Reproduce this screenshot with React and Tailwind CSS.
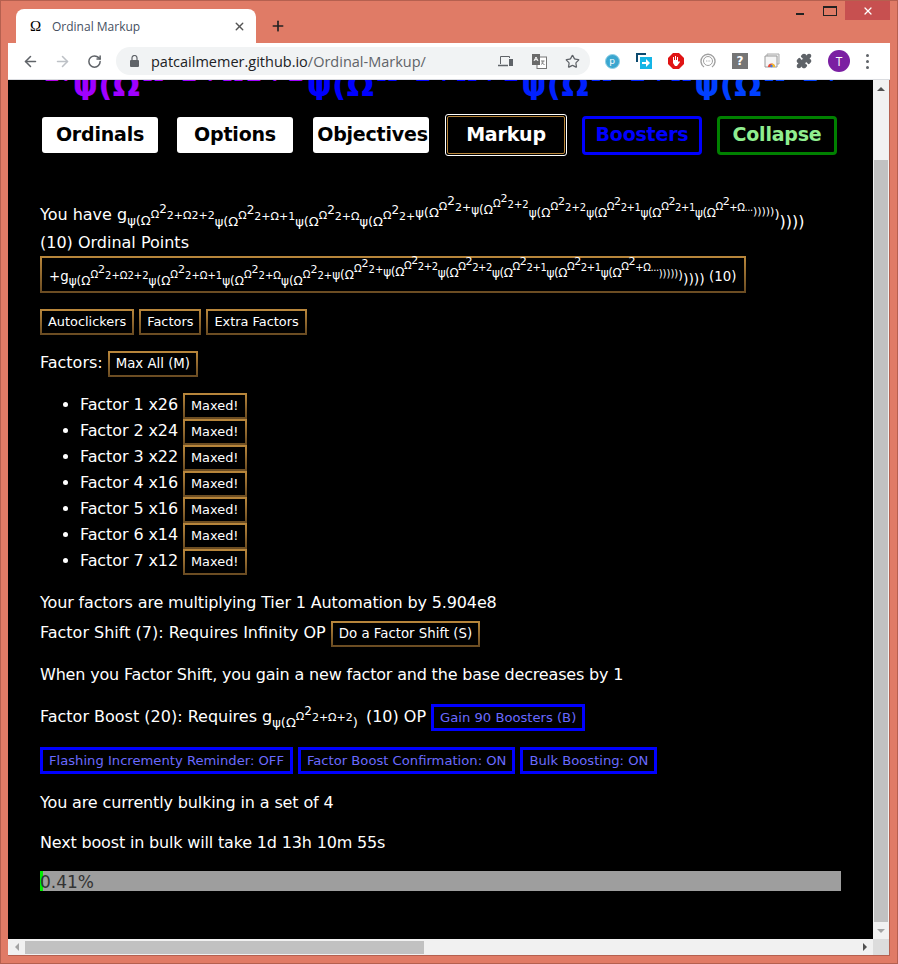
import { ArrowLeft, ArrowRight, RotateCw, Star, X, Plus, Puzzle } from 'lucide-react';

function Psi({ tail, low = -5, small = false, plain = false, tight = false }) {
  const base = small ? 'text-[12px]' : 'text-[13px]';
  const exp = small ? 'text-[10px]' : 'text-[11px]';
  const two = small ? 'text-[11px]' : 'text-[12px]';
  return (
    <span className={tight ? 'tracking-[-0.4px]' : ''}>
      <span className={base + ' leading-[0]'} style={{ verticalAlign: low + 'px' }}>ψ(Ω</span>
      <span className={exp + ' leading-[0]'} style={{ verticalAlign: low + 7 + 'px' }}>Ω</span>
      <span className={two + ' leading-[0]'} style={{ verticalAlign: low + 12 + 'px' }}>2</span>
      <span className={exp + ' leading-[0]'} style={{ verticalAlign: low + 6 + 'px' }}>{plain ? tail : '2' + tail}</span>
    </span>
  );
}

function MainOrdinal() {
  return (
    <>
      <Psi tail="+Ω2+2" low={-5} />
      <Psi tail="+Ω+1" low={-6} />
      <Psi tail="+Ω" low={-6} />
      <Psi tail="+" low={-6} />
      <Psi tail="+" low={3} />
      <Psi tail="+2" low={6} small />
      <Psi tail="+2" low={3} small />
      <Psi tail="+1" low={3} small tight />
      <Psi tail="+1" low={3} small tight />
      <Psi tail="+Ω..." low={3} small plain tight />
      <span className="text-[11px] leading-[0] align-[5px]">)))))</span>
      <span className="text-[13px] leading-[0] align-[1px]">)</span>
      <span className="text-[16px] leading-[0] align-[-7px]">))))</span>
    </>
  );
}

function ButtonOrdinal() {
  return (
    <>
      <Psi tail="+Ω2+2" low={-4} small />
      <Psi tail="+Ω+1" low={-4} small />
      <Psi tail="+Ω" low={-4} small />
      <Psi tail="+" low={-4} small />
      <Psi tail="+" low={2} small />
      <Psi tail="+2" low={5} small tight />
      <Psi tail="+2" low={4} small tight />
      <Psi tail="+1" low={4} small tight />
      <Psi tail="+1" low={4} small tight />
      <Psi tail="+Ω..." low={4} small plain tight />
      <span className="text-[10px] leading-[0] align-[4px]">)))))</span>
      <span className="text-[12px] leading-[0] align-[1px]">)</span>
      <span className="text-[14px] leading-[0] align-[-3px]">))))</span>
    </>
  );
}

function Btn({ children, size = 'text-[12.9px]' }) {
  return (
    <button className={'h-[26px] shrink-0 whitespace-nowrap border-2 bg-black px-[6px] text-white [border-image:linear-gradient(#b8863b,#6b4c22)_1] ' + size}>
      {children}
    </button>
  );
}

function BlueBtn({ children }) {
  return (
    <button className="h-[27px] shrink-0 whitespace-nowrap border-[3px] border-[#0000ff] bg-black px-[6px] text-[13.15px] text-[#6a6aff]">
      {children}
    </button>
  );
}

function TopTab({ children }) {
  return (
    <button className="h-9 w-[116px] rounded-[3px] bg-white pb-[2px] text-[19px] font-bold tracking-[-0.2px] text-black">{children}</button>
  );
}

function TickerGroup({ color, tail }) {
  return (
    <span className={color}>
      <span className="text-[32px]">ψ(Ω</span>
      <span className="ml-[3px] text-[24px] tracking-[2.5px] align-[15px]">Ω<span className="inline-block w-[15px]" />2{tail}</span>
    </span>
  );
}

const factors = [26, 24, 22, 16, 16, 14, 12];

function ExtIcon({ children }) {
  return <div className="flex h-4 w-4 items-center justify-center">{children}</div>;
}

export default function App() {
  return (
    <div className="flex h-[964px] w-[898px] flex-col overflow-hidden border-x border-b border-t border-[#b5604f] bg-[#e07b66] pl-[7px] pr-[7px] pb-[7px] font-['DejaVu_Sans',sans-serif] leading-[normal]">
      {/* tab strip */}
      <div className="flex h-[42px] shrink-0 items-end pl-2">
        <div className="flex h-[34px] w-[240px] items-center rounded-t-lg bg-white pl-[14px] pr-[10px]">
          <span className="w-[22px] font-['Liberation_Serif',serif] text-[15px] text-black">Ω</span>
          <span className="flex-1 font-['Open_Sans',sans-serif] text-[12px] text-[#45505f]">Ordinal Markup</span>
          <X size={13} strokeWidth={2.5} className="text-[#555]" />
        </div>
        <div className="flex h-[34px] items-center pl-[14px]">
          <Plus size={16} strokeWidth={2.5} className="text-[#222]" />
        </div>
        <div className="ml-auto flex h-[42px] items-start self-start">
          <div className="flex h-[19px] w-[30px] items-end justify-center pb-[5px]"><div className="h-[2px] w-2 bg-[#222]" /></div>
          <div className="flex h-[19px] w-[30px] items-center justify-center"><div className="h-[10px] w-[14px] border border-t-2 border-[#222]" /></div>
          <div className="flex h-[19px] w-[45px] items-center justify-center bg-[#c75050]"><X size={12} strokeWidth={2.5} className="text-white" /></div>
        </div>
      </div>

      {/* toolbar */}
      <div className="flex h-[37px] shrink-0 items-center border-b border-[#dadce0] bg-white pl-[14px] pr-[14px]">
        <ArrowLeft size={17} strokeWidth={2.2} className="text-[#5f6368]" />
        <ArrowRight size={17} strokeWidth={2.2} className="ml-[15px] text-[#bdc1c6]" />
        <RotateCw size={15} strokeWidth={2.4} className="ml-[16px] text-[#5f6368]" />
        <div className="ml-[14px] flex h-7 w-[474px] items-center rounded-full bg-[#f1f3f4] pl-[14px] pr-[10px]">
          <svg width="9" height="12" viewBox="0 0 9 12" fill="#5f6368"><path d="M1 5h7a1 1 0 0 1 1 1v5a1 1 0 0 1-1 1H1a1 1 0 0 1-1-1V6a1 1 0 0 1 1-1z" /><path d="M2 5V3a2.5 2.5 0 0 1 5 0v2" fill="none" stroke="#5f6368" strokeWidth="1.2" /></svg>
          <span className="ml-[12px] flex-1 font-['Open_Sans',sans-serif] text-[14.5px] text-[#202124]">
            patcailmemer.github.io<span className="text-[#5f6368]">/Ordinal-Markup/</span>
          </span>
          <svg width="16" height="12" viewBox="0 0 16 12" fill="none" stroke="#5f6368"><path d="M2.5 9V1.5h9V3" /><path d="M0 10.5h10" strokeWidth="1.5" /><rect x="11" y="4" width="4" height="7" fill="#5f6368" stroke="none" /></svg>
          <svg className="ml-[18px]" width="15" height="15" viewBox="0 0 15 15"><rect x="5" y="3" width="9.5" height="11.5" fill="#fff" stroke="#777" /><path d="M0 0h8v11H0z" fill="#6a6a6a" /><path d="M2 7l2-4 2 4M2.8 5.7h2.4" stroke="#fff" fill="none" /><path d="M9 7h3.5M11 7c0 2-1 3-2 3.5M10 8.5c.5 1 1.5 2 2.5 2" stroke="#777" fill="none" /></svg>
          <Star size={15} strokeWidth={2} className="ml-[18px] text-[#5f6368]" />
        </div>
        <div className="ml-[14px] flex items-center gap-[16px]">
          <ExtIcon>
            <div className="flex h-[15px] w-[15px] items-center justify-center rounded-full border border-[#8fd0e6] bg-[#3aa6cf] text-[9px] text-white">p</div>
          </ExtIcon>
          <ExtIcon>
            <svg width="16" height="16" viewBox="0 0 16 16"><path d="M0 0h10v2H2v7H0z" fill="#0b4a6f" /><path d="M4 4h12v12H4z" fill="#14b5e6" /><path d="M6 9h4V6l4 4-4 4v-3H6z" fill="#fff" /></svg>
          </ExtIcon>
          <ExtIcon>
            <svg width="16" height="16" viewBox="0 0 16 16"><path d="M5 0h6l5 5v6l-5 5H5l-5-5V5z" fill="#e01414" /><path d="M5 8V4h1v3h1V3h1v4h1V4h1v5l1-1 1 1-3 4H7L5 10z" fill="#fff" /></svg>
          </ExtIcon>
          <ExtIcon>
            <svg width="16" height="16" viewBox="0 0 16 16" fill="none" stroke="#a0a0a0"><path d="M4 14a7 7 0 1 1 8 0" strokeWidth="1.4" /><circle cx="8" cy="8" r="4.5" /><path d="M6 8h.8M7.7 8h.8M9.4 8h.8" /></svg>
          </ExtIcon>
          <ExtIcon>
            <div className="flex h-4 w-4 items-center justify-center bg-[#757575] text-[12px] font-bold text-white">?</div>
          </ExtIcon>
          <ExtIcon>
            <svg width="16" height="16" viewBox="0 0 16 16"><path d="M3 1h12v10H3z" fill="#eee" stroke="#aaa" /><path d="M1 3h12v11H1z" fill="#f5f5f5" stroke="#999" /><path d="M4 14a3.5 3.5 0 0 1 7 0z" fill="#e8483a" /><path d="M7.5 14V10.5A3.5 3.5 0 0 1 11 14z" fill="#f6c026" /><circle cx="7.5" cy="13" r="1.2" fill="#3b78e7" /></svg>
          </ExtIcon>
          <Puzzle size={16} fill="#5f6368" className="text-[#5f6368]" />
          <div className="flex h-[22px] w-[22px] items-center justify-center rounded-full bg-[#7b1fa2] font-['Open_Sans',sans-serif] text-[12px] text-white">T</div>
          <div className="flex flex-col gap-[3px]">
            <span className="h-[3px] w-[3px] rounded-full bg-[#5f6368]" />
            <span className="h-[3px] w-[3px] rounded-full bg-[#5f6368]" />
            <span className="h-[3px] w-[3px] rounded-full bg-[#5f6368]" />
          </div>
        </div>
      </div>

      {/* page + scrollbars */}
      <div className="flex min-h-0 flex-1 flex-col border-b border-r border-[#b5604f] bg-white">
        <div className="flex min-h-0 flex-1">
          <div className="min-w-0 flex-1 overflow-hidden bg-black text-[16px] text-white">
            {/* big ticker, only the lower edge is on screen */}
            <div className="h-5 overflow-hidden">
              <div className="mt-[-23px] whitespace-nowrap pl-[35px] font-bold leading-[32px]">
                <span className="mr-[-3px] text-[24px] align-[15px] text-[#b000e8]">1<span className="ml-[-4px]">+</span></span>
                <TickerGroup color="text-[#a000ff]" tail="+Ω2+2" />
                <TickerGroup color="text-[#0000ff]" tail="+Ω+1" />
                <TickerGroup color="text-[#0020ff]" tail="+Ω" />
                <TickerGroup color="text-[#0040ff]" tail="+" />
              </div>
            </div>

            <div className="flex items-center pl-[34px] pt-[14px]">
              <TopTab>Ordinals</TopTab>
              <div className="ml-[19px]"><TopTab>Options</TopTab></div>
              <div className="ml-[20px]"><TopTab><span className="ml-[3px]">Objectives</span></TopTab></div>
              <button className="ml-4 h-[42px] w-[122px] rounded-[3px] border border-white p-[1px] text-[19px] font-bold tracking-[-0.2px] text-white">
                <span className="flex h-full items-center justify-center rounded-[2px] border border-[#b8863b] pb-[2px]">Markup</span>
              </button>
              <button className="ml-[15px] h-[39px] w-[120px] rounded-[4px] border-[3px] border-[#0000ff] pb-[2px] text-[19px] font-bold tracking-[-0.2px] text-[#0000ff]">Boosters</button>
              <button className="ml-[15px] h-[39px] w-[120px] rounded-[4px] border-[3px] border-[#008000] pb-[2px] text-[19px] font-bold tracking-[-0.2px] text-[#90ee90]">Collapse</button>
            </div>

            <div className="pl-8 pt-[43px] leading-[22px]">
              <p className="h-[57px] whitespace-nowrap leading-[28px]">
                You have g<MainOrdinal /><br />(10) Ordinal Points
              </p>
              <button className="flex h-[37px] w-[706px] items-center whitespace-nowrap border-2 pl-[7px] text-[13.33px] [border-image:linear-gradient(#b8863b,#6b4c22)_1]">
                <span>+g<ButtonOrdinal /> (10)</span>
              </button>

              <div className="mt-4 flex gap-[5px]">
                <Btn>Autoclickers</Btn>
                <Btn>Factors</Btn>
                <Btn>Extra Factors</Btn>
              </div>

              <div className="mt-4 flex items-center gap-[5px]">
                <span className="mb-[2px]">Factors:</span>
                <Btn size="text-[13.3px]">Max All (M)</Btn>
              </div>

              <ul className="mt-4 list-disc pl-10">
                {factors.map((x, i) => (
                  <li key={i}>
                    <div className="flex h-[26px] items-center gap-[5px]">
                      <span className="mb-[2px] tracking-[-0.1px]">Factor {i + 1} x{x}</span>
                      <Btn>Maxed!</Btn>
                    </div>
                  </li>
                ))}
              </ul>

              <p className="mt-[17px] tracking-[-0.14px]">Your factors are multiplying Tier 1 Automation by 5.904e8</p>
              <div className="mt-[7px] flex items-center gap-[5px]">
                <span className="mb-[2px]">Factor Shift (7): Requires Infinity OP</span>
                <Btn size="text-[13.33px]">Do a Factor Shift (S)</Btn>
              </div>
              <p className="mt-[17px] tracking-[-0.18px]">When you Factor Shift, you gain a new factor and the base decreases by 1</p>
              <div className="mt-[18px] flex items-center gap-[5px]">
                <span className="mb-[2px]">
                  Factor Boost (20): Requires g<span className="text-[13px] leading-[0] align-[-5px]">ψ(Ω</span><span className="text-[11px] leading-[0] align-[2px]">Ω</span><span className="text-[12px] leading-[0] align-[7px]">2</span><span className="text-[11px] leading-[0] align-[1px]">2+Ω+2</span><span className="text-[13px] leading-[0] align-[-5px]">)</span><span className="ml-[3px]"> (10) OP</span>
                </span>
                <BlueBtn>Gain 90 Boosters (B)</BlueBtn>
              </div>
              <div className="mt-4 flex h-7 items-stretch gap-[5px]">
                <BlueBtn>Flashing Incrementy Reminder: OFF</BlueBtn>
                <BlueBtn>Factor Boost Confirmation: ON</BlueBtn>
                <BlueBtn>Bulk Boosting: ON</BlueBtn>
              </div>
              <p className="mt-[17px] tracking-[-0.14px]">You are currently bulking in a set of 4</p>
              <p className="mt-[18px] tracking-[-0.17px]">Next boost in bulk will take 1d 13h 10m 55s</p>
              <div className="mt-[17px] h-5 w-[801px] bg-[#9e9e9e] text-[17px] leading-[22px] text-[#333]">
                <div className="h-5 w-[3px] whitespace-nowrap bg-[#00ee00]">0.41%</div>
              </div>
            </div>
          </div>

          {/* vertical scrollbar */}
          <div className="flex w-4 shrink-0 flex-col items-center bg-[#f1f1f1]">
            <div className="flex h-[17px] items-center"><div className="h-0 w-0 border-x-[4px] border-b-[4px] border-x-transparent border-b-[#505050]" /></div>
            <div className="mt-[63px] w-[14px] flex-1 bg-[#c1c1c1]" />
            <div className="flex h-[17px] items-center"><div className="h-0 w-0 border-x-[4px] border-t-[4px] border-x-transparent border-t-[#a3a3a3]" /></div>
          </div>
        </div>

        {/* horizontal scrollbar */}
        <div className="flex h-4 shrink-0 items-center bg-[#f1f1f1]">
          <div className="flex w-[17px] justify-center"><div className="h-0 w-0 border-y-[4px] border-r-[4px] border-y-transparent border-r-[#a3a3a3]" /></div>
          <div className="h-[13px] w-[399px] bg-[#c1c1c1]" />
          <div className="ml-auto flex w-[17px] justify-center"><div className="h-0 w-0 border-y-[4px] border-l-[4px] border-y-transparent border-l-[#505050]" /></div>
          <div className="h-4 w-4 bg-[#dcdcdc]" />
        </div>
      </div>
    </div>
  );
}
